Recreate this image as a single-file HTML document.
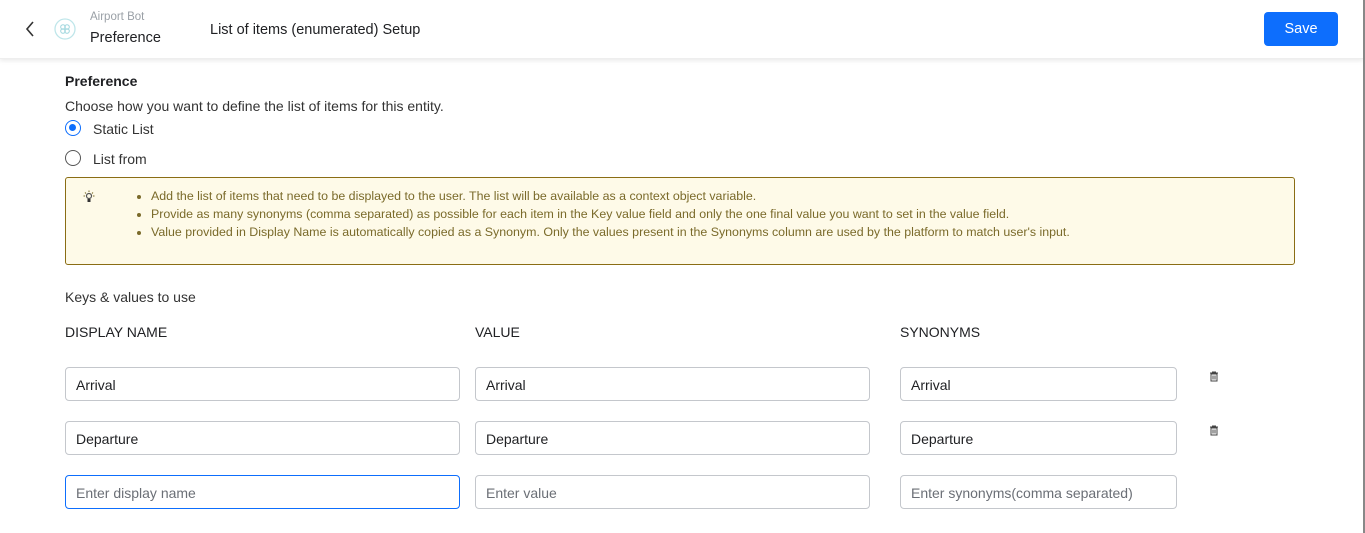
<!DOCTYPE html>
<html><head><style>
*{box-sizing:border-box;margin:0;padding:0}
body{width:1365px;height:533px;overflow:hidden;background:#fff;font-family:"Liberation Sans",Arial,sans-serif;color:#202124;position:relative}
.hdr{position:absolute;left:0;top:0;width:1363px;height:59px;background:#fff;box-shadow:0 2px 4px rgba(0,0,0,.08);border-bottom:1px solid #eee}
.sb{position:absolute;right:0;top:0;width:2px;height:533px;background:#888}
.abs{position:absolute}
.in{position:absolute;height:34px;border:1px solid #c4c7cc;border-radius:4px;font-size:14px;padding:0 10px;line-height:34px;color:#202124}
.ph{color:#6b6f76}
.lbl{position:absolute;font-size:14px;color:#202124}
.tip li{font-size:12.4px;color:#7a6a2a;line-height:18px}
</style></head><body>
<div class="hdr">
 <svg class="abs" style="left:25px;top:21px" width="10" height="16"><path d="M8 1 L2 8 L8 15" stroke="#333" stroke-width="1.6" fill="none"/></svg>
 <svg class="abs" style="left:54px;top:18px" width="22" height="22"><circle cx="11" cy="11" r="10" fill="none" stroke="#bfe6ea" stroke-width="1.3"/><circle cx="9" cy="9" r="2.3" fill="none" stroke="#9fd6dd"/><circle cx="13" cy="9" r="2.3" fill="none" stroke="#9fd6dd"/><circle cx="9" cy="13" r="2.3" fill="none" stroke="#9fd6dd"/><circle cx="13" cy="13" r="2.3" fill="none" stroke="#9fd6dd"/></svg>
 <div class="abs" style="left:90px;top:11px;font-size:11.5px;color:#9aa0a6">Airport Bot</div>
 <div class="abs" style="left:90px;top:30px;font-size:14.5px;color:#202124">Preference</div>
 <div class="abs" style="left:210px;top:22px;font-size:14.5px;color:#202124">List of items (enumerated) Setup</div>
 <div class="abs" style="left:1264px;top:12px;width:74px;height:34px;background:#0d6efd;border-radius:4px;color:#fff;font-size:14.5px;text-align:center;line-height:34px">Save</div>
</div>
<div class="sb"></div>
<div class="abs" style="left:65px;top:73px;font-size:14px;font-weight:bold">Preference</div>
<div class="abs" style="left:65px;top:98px;font-size:14px;color:#333">Choose how you want to define the list of items for this entity.</div>
<div class="abs" style="left:65px;top:120px;width:16px;height:16px;border:1.5px solid #0d6efd;border-radius:50%"><div style="margin:3px;width:7px;height:7px;border-radius:50%;background:#0d6efd"></div></div>
<div class="abs" style="left:93px;top:121px;font-size:14px;color:#333">Static List</div>
<div class="abs" style="left:65px;top:150px;width:16px;height:16px;border:1.3px solid #555;border-radius:50%"></div>
<div class="abs" style="left:93px;top:151px;font-size:14px;color:#333">List from</div>
<div class="abs tip" style="left:65px;top:177px;width:1230px;height:88px;background:#fefae8;border:1px solid #8a6d14;border-radius:3px">
 <svg class="abs" style="left:16px;top:12px" width="14" height="14"><circle cx="7" cy="6" r="2.5" fill="none" stroke="#555" stroke-width="1.2"/><rect x="5.5" y="9" width="3" height="3" fill="#333"/><path d="M7 0.5v1.5M1.5 6h1.5M11 6h1.5M3 2.5l1 1M11 2.5l-1 1" stroke="#7a6a2a" stroke-width="1"/></svg>
 <ul style="position:absolute;left:85px;top:9px">
 <li>Add the list of items that need to be displayed to the user. The list will be available as a context object variable.</li>
 <li>Provide as many synonyms (comma separated) as possible for each item in the Key value field and only the one final value you want to set in the value field.</li>
 <li>Value provided in Display Name is automatically copied as a Synonym. Only the values present in the Synonyms column are used by the platform to match user's input.</li>
 </ul>
</div>
<div class="lbl" style="left:65px;top:289px;color:#333">Keys &amp; values to use</div>
<div class="lbl" style="left:65px;top:324px">DISPLAY NAME</div>
<div class="lbl" style="left:475px;top:324px">VALUE</div>
<div class="lbl" style="left:900px;top:324px">SYNONYMS</div>

<div class="in" style="left:65px;top:367px;width:395px">Arrival</div>
<div class="in" style="left:475px;top:367px;width:395px">Arrival</div>
<div class="in" style="left:900px;top:367px;width:277px">Arrival</div>
<div class="in" style="left:65px;top:421px;width:395px">Departure</div>
<div class="in" style="left:475px;top:421px;width:395px">Departure</div>
<div class="in" style="left:900px;top:421px;width:277px">Departure</div>
<div class="in ph" style="left:65px;top:475px;width:395px;border-color:#0d6efd">Enter display name</div>
<div class="in ph" style="left:475px;top:475px;width:395px">Enter value</div>
<div class="in ph" style="left:900px;top:475px;width:277px">Enter synonyms(comma separated)</div>

<svg class="abs" style="left:1209px;top:371px" width="10" height="11"><path d="M1 2h8M3.5 2V1h3v1M2 3h6v7H2z" stroke="#444" fill="#fff" stroke-width="1"/><path d="M4 4.5v4M6 4.5v4" stroke="#444"/></svg>
<svg class="abs" style="left:1209px;top:425px" width="10" height="11"><path d="M1 2h8M3.5 2V1h3v1M2 3h6v7H2z" stroke="#444" fill="#fff" stroke-width="1"/><path d="M4 4.5v4M6 4.5v4" stroke="#444"/></svg>
</body></html>
